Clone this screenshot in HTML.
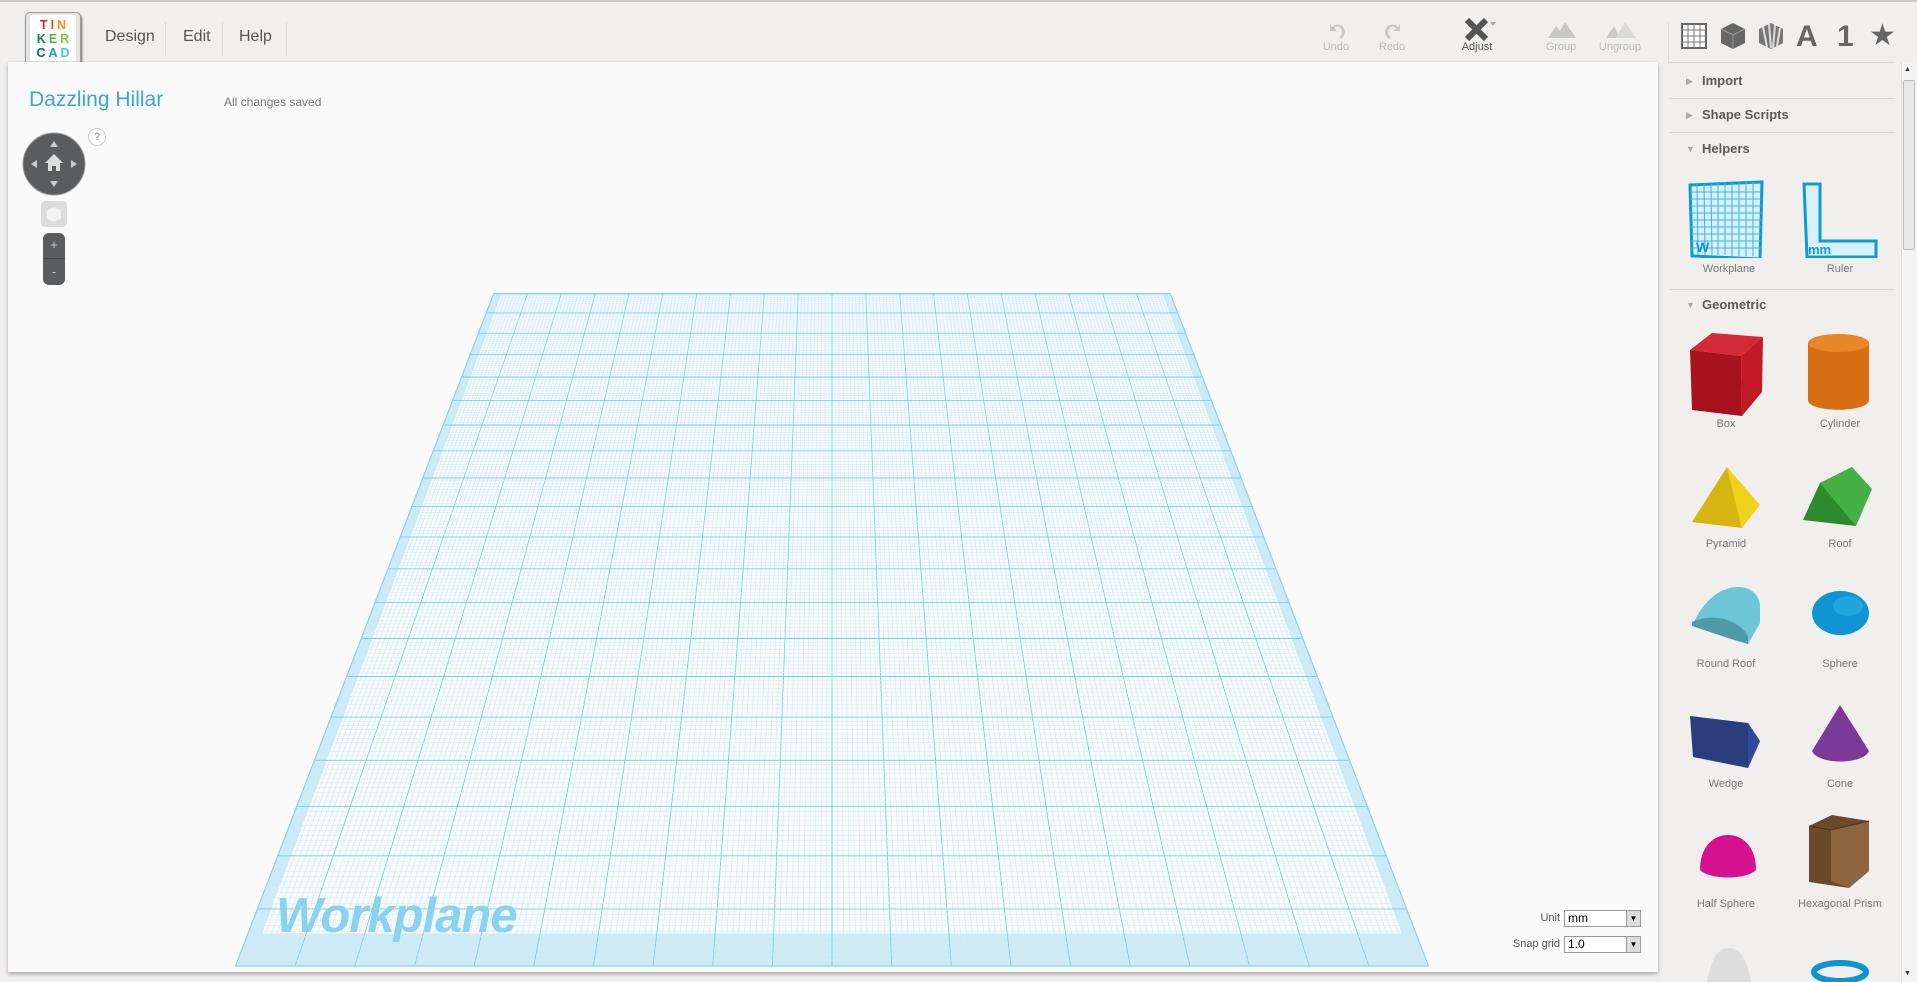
<!DOCTYPE html>
<html><head><meta charset="utf-8">
<style>
*{margin:0;padding:0;box-sizing:border-box}
body{width:1917px;height:982px;overflow:hidden;background:#f0efee;font-family:"Liberation Sans",sans-serif;position:relative}
.abs{position:absolute}
.topline{left:0;top:0;width:1917px;height:3px;border-top:2px solid #c9c9c9}
.menu{top:28px;font-size:16px;color:#555}
.sep{top:22px;width:1px;height:34px;background:#dcdcdc}
.tb{font-size:11px;color:#bbb;width:60px;text-align:center;top:41px}
#canvas{left:8px;top:62px;width:1650px;height:910px;background:#fafafa;box-shadow:0 2px 4px rgba(0,0,0,.3)}
.row{left:1669px;width:226px;height:1px;background:#d8d8d8}
.hdr{left:1702px;font-size:13px;font-weight:bold;color:#5a5a5a}
.tri{left:1686px;font-size:9px;color:#aaa}
.lbl{font-size:11px;color:#777;width:130px;text-align:center}
</style></head><body>
<div class="abs topline"></div>
<!-- logo -->
<div class="abs" style="left:25px;top:12px;width:56px;height:55px;border-radius:5px;background:#e4e4e4;box-shadow:1px 2px 2px #666;border:1px solid #999"></div>
<div class="abs" style="left:30px;top:15px;width:46px;height:46px;background:#fff;font-weight:bold;font-size:12.5px;line-height:14px;text-align:center;letter-spacing:3px;padding-top:3px;padding-left:3px">
<span style="color:#d8262b">T</span><span style="color:#e8432a">I</span><span style="color:#f39221">N</span><br><span style="color:#12893e">K</span><span style="color:#5ab546">E</span><span style="color:#8dc63f">R</span><br><span style="color:#0e5fa3">C</span><span style="color:#139bd6">A</span><span style="color:#3dc4e8">D</span></div>
<div class="abs menu" style="left:105px">Design</div>
<div class="abs sep" style="left:165px"></div>
<div class="abs menu" style="left:183px">Edit</div>
<div class="abs sep" style="left:222px"></div>
<div class="abs menu" style="left:239px">Help</div>
<div class="abs sep" style="left:286px"></div>

<!-- toolbar -->
<svg class="abs" style="left:1326px;top:20px" width="22" height="20" viewBox="0 0 22 20"><path d="M4 4v7h7L8 8c3-3 8-1 8 4 0 2-1 4-3 5l2 2c3-2 4-5 4-7 0-7-8-10-13-5z" fill="#c8c8c8"/></svg>
<div class="abs tb" style="left:1306px">Undo</div>
<svg class="abs" style="left:1382px;top:20px" width="22" height="20" viewBox="0 0 22 20"><path d="M18 4v7h-7l3-3c-3-3-8-1-8 4 0 2 1 4 3 5l-2 2c-3-2-4-5-4-7 0-7 8-10 13-5z" fill="#c8c8c8"/></svg>
<div class="abs tb" style="left:1362px">Redo</div>
<svg class="abs" style="left:1464px;top:17px" width="34" height="26" viewBox="0 0 34 26"><path d="M3 3l19 19M22 3L3 22" stroke="#555" stroke-width="6"/><path d="M26 5h6l-3 4z" fill="#aaa"/></svg>
<div class="abs tb" style="left:1447px;color:#555">Adjust</div>
<svg class="abs" style="left:1548px;top:22px" width="28" height="16" viewBox="0 0 28 16"><path d="M0 16L8 4l4 5 5-9 11 16z" fill="#c8c8c8"/></svg>
<div class="abs tb" style="left:1531px">Group</div>
<svg class="abs" style="left:1606px;top:22px" width="30" height="16" viewBox="0 0 30 16"><path d="M0 16L8 4l6 12z" fill="#c8c8c8"/><path d="M10 16L19 0l11 16z" fill="#dadada"/></svg>
<div class="abs tb" style="left:1590px">Ungroup</div>
<div class="abs sep" style="left:1668px;top:22px;height:42px"></div>
<!-- right icons -->
<svg class="abs" style="left:1681px;top:23px" width="26" height="26" viewBox="0 0 26 26"><rect x="1" y="1" width="24" height="24" fill="#fff" stroke="#666" stroke-width="2"/><path d="M7 1v24M13 1v24M19 1v24M1 7h24M1 13h24M1 19h24" stroke="#777" stroke-width="1"/></svg>
<svg class="abs" style="left:1720px;top:22px" width="26" height="28" viewBox="0 0 26 28"><path d="M13 1l12 6v14l-12 6-12-6V7z" fill="#666"/><path d="M1 7l12 6 12-6M13 13v14" stroke="#999" stroke-width="1" fill="none"/></svg>
<svg class="abs" style="left:1758px;top:22px" width="26" height="28" viewBox="0 0 26 28"><path d="M13 1l12 6v14l-12 6-12-6V7z" fill="#777"/><path d="M5 5l4 20M11 2l2 24M17 3l-2 23M22 6l-3 18" stroke="#ddd" stroke-width="2"/></svg>
<div class="abs" style="left:1796px;top:20px;font-size:30px;font-weight:bold;color:#666">A</div>
<div class="abs" style="left:1837px;top:20px;font-size:30px;font-weight:bold;color:#666">1</div>
<div class="abs" style="left:1869px;top:18px;font-size:30px;color:#666">★</div>

<!-- canvas -->
<div id="canvas" class="abs"></div>
<div class="abs" style="left:29px;top:88px;font-size:21px;color:#3aa8c8">Dazzling Hillar</div>
<div class="abs" style="left:224px;top:95px;font-size:12px;color:#777">All changes saved</div>
<div class="abs" style="left:88px;top:128px;width:18px;height:18px;border-radius:50%;border:1px solid #ccc;background:#fff;font-size:11px;color:#999;text-align:center;line-height:16px">?</div>
<svg class="abs" style="left:22px;top:132px" width="64" height="64" viewBox="0 0 64 64"><circle cx="32" cy="32" r="31" fill="#5b5c5e" stroke="#9a9a9a" stroke-width="1"/><path d="M32 9l4 6h-8zM32 55l4-6h-8zM9 32l6-4v8zM55 32l-6-4v8z" fill="#ccc"/><path d="M32 22l-9 9h3v8h4v-5h4v5h4v-8h3z" fill="#ddd"/></svg>
<div class="abs" style="left:41px;top:201px;width:26px;height:26px;border-radius:4px;background:#dcdcdc"><svg width="26" height="26" viewBox="0 0 26 26"><path d="M13 6l7 3.5v8L13 21l-7-3.5v-8z" fill="#f2f2f2"/></svg></div>
<div class="abs" style="left:43px;top:233px;width:22px;height:52px;border-radius:6px;background:#5b5c5e;color:#ccc;font-size:13px;text-align:center;line-height:24px">+<div style="height:1px;background:#444;margin:1px 0"></div>-</div>

<svg id="grid" class="abs" style="left:0;top:0" width="1660" height="975"></svg>
<div class="abs" style="left:276px;top:888px;font-size:49px;font-style:italic;font-weight:bold;color:#8ad2ee;letter-spacing:-1px">Workplane</div>

<div class="abs" style="left:1525px;top:912px;font-size:11px;color:#555;width:35px;text-align:right">Unit</div>
<div class="abs" style="left:1564px;top:910px;width:77px;height:17px;border:1px solid #999;background:#fff;font-size:12px;padding-left:3px">mm<div style="position:absolute;right:0;top:0;width:14px;height:15px;background:#ddd;border-left:1px solid #999;font-size:8px;text-align:center;line-height:15px">▼</div></div>
<div class="abs" style="left:1500px;top:938px;font-size:11px;color:#555;width:60px;text-align:right">Snap grid</div>
<div class="abs" style="left:1564px;top:936px;width:77px;height:17px;border:1px solid #999;background:#fff;font-size:12px;padding-left:3px">1.0<div style="position:absolute;right:0;top:0;width:14px;height:15px;background:#ddd;border-left:1px solid #999;font-size:8px;text-align:center;line-height:15px">▼</div></div>

<!-- sidebar -->
<div class="abs row" style="top:62px"></div>
<div class="abs tri" style="top:76px">▶</div><div class="abs hdr" style="top:73px">Import</div>
<div class="abs row" style="top:98px"></div>
<div class="abs tri" style="top:110px">▶</div><div class="abs hdr" style="top:107px">Shape Scripts</div>
<div class="abs row" style="top:132px"></div>
<div class="abs tri" style="top:144px">▼</div><div class="abs hdr" style="top:141px">Helpers</div>
<svg class="abs" style="left:1688px;top:178px" width="80" height="80" viewBox="0 0 80 80"><path d="M2 7l72-3-2 77-68-3z" fill="#d8f0fa" stroke="#0e9bd3" stroke-width="3"/><g stroke="#3cb5e3" stroke-width="1"><path d="M9 6l1 71M16 6l1 71M23 6l1 71M30 5v72M37 5v72M44 5v73M51 5v73M58 4v74M65 4v74M3 14h70M3 21h70M3 28h70M3 35h70M3 42h70M3 49h70M3 56h70M3 63h70M3 70h70"/></g><text x="8" y="74" font-family="Liberation Sans" font-weight="bold" font-size="14" fill="#0e9bd3">W</text></svg>
<svg class="abs" style="left:1802px;top:182px" width="76" height="76" viewBox="0 0 76 76"><path d="M2 2h16v57h56v16H5z" fill="#d8f0fa" stroke="#0e9bd3" stroke-width="3"/><text x="6" y="72" font-family="Liberation Sans" font-weight="bold" font-size="13" fill="#0e9bd3">mm</text></svg>
<div class="abs lbl" style="left:1664px;top:263px">Workplane</div>
<div class="abs lbl" style="left:1775px;top:263px">Ruler</div>
<div class="abs row" style="top:289px"></div>
<div class="abs tri" style="top:300px">▼</div><div class="abs hdr" style="top:297px">Geometric</div>

<svg class="abs" style="left:0;top:0" width="1917" height="982" viewBox="0 0 1917 982">
<!-- box 1690-1763, 333-416 -->
<path d="M1690 350l22-17 51 4-22 19z" fill="#d42a35"/><path d="M1690 350l51 6 1 60-50-6z" fill="#a8121e"/><path d="M1741 356l22-19-1 55-20 24z" fill="#c21a27"/>
<!-- cylinder 1808-1869, 334-410 -->
<path d="M1808 343v57c0 13 61 13 61 0v-57z" fill="#d86e14"/><ellipse cx="1838.5" cy="343" rx="30.5" ry="9" fill="#e98628"/>
<!-- pyramid 1692-1760, 467-528 -->
<path d="M1727 467l-35 55 50 6z" fill="#d6b510"/><path d="M1727 467l15 61 18-23z" fill="#f0d21a"/>
<!-- roof 1803-1872, 467-526 -->
<path d="M1852 467l-32 16-17 37 53 6z" fill="#2e8a2e"/><path d="M1852 467l20 22-16 37-36-43z" fill="#45b045"/>
<!-- round roof 1692-1760, 587-644 -->
<path d="M1694 622c8-18 24-35 44-35 14 0 22 9 22 20v16l-12 21-20-6z" fill="#6cc6d6"/><path d="M1692 622c16-8 44-6 56 14v8l-20-6-36-12z" fill="#4e9ba8"/>
<!-- sphere 1812-1869, 583-642 -->
<ellipse cx="1840.5" cy="613" rx="28.5" ry="22" fill="#0f95d2"/><ellipse cx="1848" cy="606" rx="15" ry="10" fill="#2cb1e6" opacity=".6"/>
<!-- wedge 1690-1760, 716-768 -->
<path d="M1690 716l58 7 12 18-12 27-55-11z" fill="#2b3d7c"/><path d="M1748 723l12 18-12 27z" fill="#34489a"/>
<!-- cone 1812-1869, 705-764 -->
<path d="M1840 705l-28 46c6 14 51 14 57 0z" fill="#7b3a98"/>
<!-- half sphere 1700-1756, 835-878 -->
<path d="M1700 870c0-24 14-35 28-35s28 11 28 35c-10 10-46 10-56 0z" fill="#d4128f"/>
<!-- hex 1809-1869, 815-888 -->
<path d="M1809 826l23-11 37 6v50l-20 17-40-6z" fill="#6b4a2a"/><path d="M1831 830l38-9v50l-20 17-18-7z" fill="#8d6540"/><path d="M1809 826l22 4 38-9" stroke="#4a3119" fill="none"/>
<!-- paraboloid & torus -->
<path d="M1707 982c4-22 10-34 22-34s18 12 22 34z" fill="#ddd"/>
<ellipse cx="1840" cy="972" rx="26" ry="9" fill="none" stroke="#0e95cf" stroke-width="6"/>
</svg>
<div class="abs lbl" style="left:1661px;top:418px">Box</div>
<div class="abs lbl" style="left:1775px;top:418px">Cylinder</div>
<div class="abs lbl" style="left:1661px;top:538px">Pyramid</div>
<div class="abs lbl" style="left:1775px;top:538px">Roof</div>
<div class="abs lbl" style="left:1661px;top:658px">Round Roof</div>
<div class="abs lbl" style="left:1775px;top:658px">Sphere</div>
<div class="abs lbl" style="left:1661px;top:778px">Wedge</div>
<div class="abs lbl" style="left:1775px;top:778px">Cone</div>
<div class="abs lbl" style="left:1661px;top:898px">Half Sphere</div>
<div class="abs lbl" style="left:1775px;top:898px">Hexagonal Prism</div>
<!-- scrollbar -->
<div class="abs" style="left:1901px;top:62px;width:16px;height:920px;background:#f4f4f4;border-left:1px solid #ddd"></div>
<div class="abs" style="left:1903px;top:80px;width:12px;height:170px;background:#e8e8e8;border:1px solid #bbb;border-radius:2px"></div>
<div class="abs" style="left:1904px;top:66px;font-size:7px;color:#333">▲</div>
<div class="abs" style="left:1904px;top:970px;font-size:7px;color:#333">▼</div>
<script>
(function(){
var s=document.getElementById('grid'),h='';
var k=0.763,yh=-588,W=1193,cx=832;
function P(u,v){var t=1-v;var sc=1/(1+k*t);return [cx+(u-0.5)*W*sc,yh+1554*sc];}
function pt(u,v){var p=P(u,v);return p[0].toFixed(1)+','+p[1].toFixed(1);}
h+='<polygon points="'+pt(0,0)+' '+pt(1,0)+' '+pt(1,1)+' '+pt(0,1)+'" fill="#cdebf7"/>';
var b=0.012,bb=0.028;
h+='<polygon points="'+pt(b,0.004)+' '+pt(1-b,0.004)+' '+pt(1-b,1-bb)+' '+pt(b,1-bb)+'" fill="#f7fbfd"/>';
for(var i=0;i<=200;i++){var u=i/200;var maj=i%10==0;
 var a=P(u,0),c=P(u,1);
 h+='<line x1="'+a[0].toFixed(1)+'" y1="'+a[1]+'" x2="'+c[0].toFixed(1)+'" y2="'+c[1]+'" stroke="'+(maj?'#7ccbe8':'#cce9f5')+'" stroke-width="'+(maj?0.9:0.6)+'"/>';}
for(var j=0;j<=200;j++){var v=j/200;var maj=j%10==0;
 var a=P(0,v),c=P(1,v);
 h+='<line x1="'+a[0].toFixed(1)+'" y1="'+a[1].toFixed(1)+'" x2="'+c[0].toFixed(1)+'" y2="'+c[1].toFixed(1)+'" stroke="'+(maj?'#7ccbe8':'#d0ebf6')+'" stroke-width="'+(maj?0.9:0.5)+'"/>';}
h+='<polygon points="'+pt(0,0)+' '+pt(1,0)+' '+pt(1,1)+' '+pt(0,1)+'" fill="none" stroke="#8fd2ee" stroke-width="1.2"/>';
s.innerHTML=h;
})();
</script>
</body></html>
